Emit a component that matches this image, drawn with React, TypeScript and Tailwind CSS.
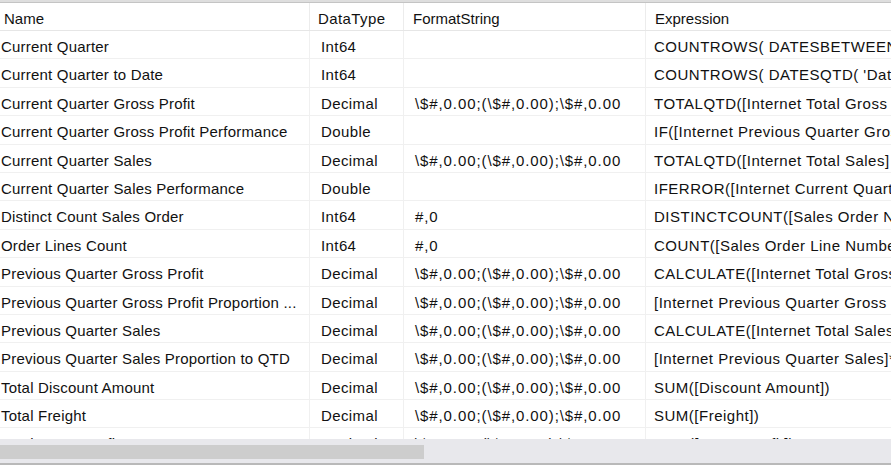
const FMT = "\\$#,0.00;(\\$#,0.00);\\$#,0.00";

type Medida = { nombre: string; tipo: string; formato: string; expresion: string };

const medidas: Medida[] = [
  { nombre: "Current Quarter", tipo: "Int64", formato: "", expresion: "COUNTROWS( DATESBETWEEN( 'Date'[Date]" },
  { nombre: "Current Quarter to Date", tipo: "Int64", formato: "", expresion: "COUNTROWS( DATESQTD( 'Date'[Date] ) )" },
  { nombre: "Current Quarter Gross Profit", tipo: "Decimal", formato: FMT, expresion: "TOTALQTD([Internet Total Gross Profit]" },
  { nombre: "Current Quarter Gross Profit Performance", tipo: "Double", formato: "", expresion: "IF([Internet Previous Quarter Gross Profit]" },
  { nombre: "Current Quarter Sales", tipo: "Decimal", formato: FMT, expresion: "TOTALQTD([Internet Total Sales]" },
  { nombre: "Current Quarter Sales Performance", tipo: "Double", formato: "", expresion: "IFERROR([Internet Current Quarter Sales]" },
  { nombre: "Distinct Count Sales Order", tipo: "Int64", formato: "#,0", expresion: "DISTINCTCOUNT([Sales Order Number])" },
  { nombre: "Order Lines Count", tipo: "Int64", formato: "#,0", expresion: "COUNT([Sales Order Line Number])" },
  { nombre: "Previous Quarter Gross Profit", tipo: "Decimal", formato: FMT, expresion: "CALCULATE([Internet Total Gross Profit]" },
  { nombre: "Previous Quarter Gross Profit Proportion ...", tipo: "Decimal", formato: FMT, expresion: "[Internet Previous Quarter Gross Profit]" },
  { nombre: "Previous Quarter Sales", tipo: "Decimal", formato: FMT, expresion: "CALCULATE([Internet Total Sales]" },
  { nombre: "Previous Quarter Sales Proportion to QTD", tipo: "Decimal", formato: FMT, expresion: "[Internet Previous Quarter Sales]*" },
  { nombre: "Total Discount Amount", tipo: "Decimal", formato: FMT, expresion: "SUM([Discount Amount])" },
  { nombre: "Total Freight", tipo: "Decimal", formato: FMT, expresion: "SUM([Freight])" },
  { nombre: "Total Gross Profit", tipo: "Decimal", formato: FMT, expresion: "SUM([Gross Profit])" },
];

export default function App() {
  return (
    <div
      className="flex h-[468px] w-[891px] flex-col overflow-hidden bg-white text-[15px] text-[#111]"
      style={{ fontFamily: '"Liberation Sans", Arial, sans-serif' }}
    >
      <div className="h-[3px] shrink-0 border-b border-[#c4c4c4] bg-[#dedede]" />

      {/* cabecera */}
      <div className="flex h-[28px] shrink-0 border-b border-[#e6e6e6]">
        <div className="w-[310px] shrink-0 whitespace-nowrap border-r border-[#ececec] pl-[4px] pt-[2px] leading-[27px]">Name</div>
        <div className="w-[94px] shrink-0 whitespace-nowrap border-r border-[#ececec] pl-[8px] pt-[2px] leading-[27px] tracking-[0.4px]">DataType</div>
        <div className="w-[242px] shrink-0 whitespace-nowrap border-r border-[#ececec] pl-[9px] pt-[2px] leading-[27px]">FormatString</div>
        <div className="flex-1 whitespace-nowrap pl-[9px] pt-[2px] leading-[27px]">Expression</div>
      </div>

      {/* filas */}
      <div className="flex-1 overflow-hidden">
        {medidas.map((m) => (
          <div key={m.nombre} className="flex h-[28.4px] border-b border-[#f0f0f0]">
            <div className="w-[310px] shrink-0 overflow-hidden whitespace-nowrap border-r border-[#f0f0f0] pl-[1px] pt-[2px] leading-[27px] tracking-[0.2px]">
              {m.nombre}
            </div>
            <div className="w-[94px] shrink-0 whitespace-nowrap border-r border-[#f0f0f0] pl-[11px] pt-[2px] leading-[27px] tracking-[0.4px]">
              {m.tipo}
            </div>
            <div className="w-[242px] shrink-0 whitespace-nowrap border-r border-[#f0f0f0] pl-[11px] pt-[2px] leading-[27px] tracking-[0.9px]">
              {m.formato}
            </div>
            <div className="flex-1 overflow-hidden whitespace-nowrap pl-[8px] pt-[2px] leading-[27px] tracking-[0.5px]">
              {m.expresion}
            </div>
          </div>
        ))}
      </div>

      {/* barra de desplazamiento horizontal */}
      <div className="flex h-[24px] shrink-0 items-start bg-[#e8e8ec] pt-[6px]">
        <div className="h-[14px] w-[424px] bg-[#cdcdcd]" />
      </div>
      <div className="h-[2px] shrink-0 bg-[#b9b9b9]" />
      <div className="h-[3px] shrink-0 bg-white" />
    </div>
  );
}
